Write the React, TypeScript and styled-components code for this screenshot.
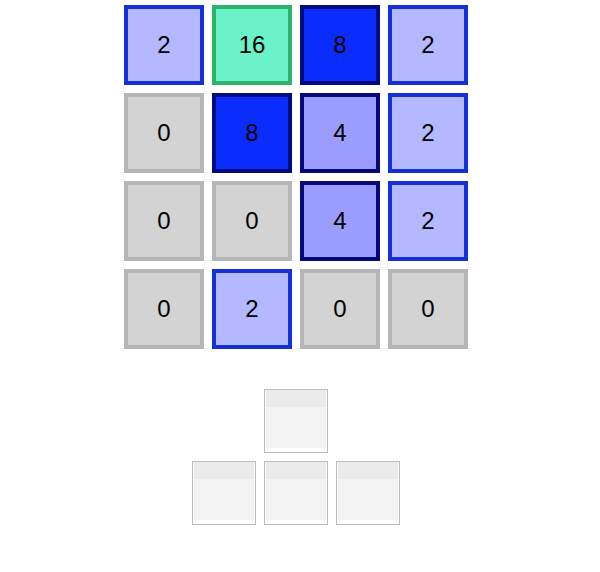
import React from "react";
import styled, { createGlobalStyle } from "styled-components";

const Global = createGlobalStyle`
  html, body { margin: 0; padding: 0; background: #ffffff; }
  body { font-family: "Liberation Sans", Arial, Helvetica, sans-serif; }
`;

type Palette = { bg: string; border: string };

const palette: Record<number, Palette> = {
  0: { bg: "#d3d3d3", border: "#b6b6b6" },
  2: { bg: "#b4b8fe", border: "#1530d6" },
  4: { bg: "#9a9dfd", border: "#05097a" },
  8: { bg: "#0a2dfd", border: "#000c7d" },
  16: { bg: "#6cf2c9", border: "#2db46c" },
};

const board: number[][] = [
  [2, 16, 8, 2],
  [0, 8, 4, 2],
  [0, 0, 4, 2],
  [0, 2, 0, 0],
];

const Page = styled.div`
  width: 592px;
  display: flex;
  flex-direction: column;
  align-items: center;
  padding-top: 5px;
`;

const Board = styled.div`
  display: grid;
  grid-template-columns: repeat(4, 80px);
  grid-auto-rows: 80px;
  gap: 8px;
`;

const Tile = styled.div<{ $bg: string; $border: string }>`
  box-sizing: border-box;
  width: 80px;
  height: 80px;
  border: 4px solid ${(p) => p.$border};
  background: ${(p) => p.$bg};
  display: flex;
  align-items: center;
  justify-content: center;
  font-size: 24px;
  line-height: 1;
  color: #000;
  padding-bottom: 1px;
`;

const Controls = styled.div`
  margin-top: 40px;
  display: grid;
  grid-template-columns: repeat(3, 64px);
  grid-auto-rows: 64px;
  gap: 8px;
`;

const Key = styled.button<{ $col: number; $row: number }>`
  grid-column: ${(p) => p.$col};
  grid-row: ${(p) => p.$row};
  box-sizing: border-box;
  width: 64px;
  height: 64px;
  padding: 0;
  border: 1px solid #bdbdbd;
  border-radius: 0;
  background: linear-gradient(
    to bottom,
    #ebebeb 0%,
    #ebebeb 28%,
    #f3f3f3 28%,
    #f3f3f3 94%,
    #ffffff 94%,
    #ffffff 100%
  );
  box-shadow: inset 1px 0 0 #fafafa, inset -1px 0 0 #fafafa;
`;

export default function App() {
  return (
    <>
      <Global />
      <Page>
        <Board>
          {board.flat().map((v, i) => (
            <Tile key={i} $bg={palette[v].bg} $border={palette[v].border}>
              {v}
            </Tile>
          ))}
        </Board>
        <Controls>
          <Key $col={2} $row={1} aria-label="up" />
          <Key $col={1} $row={2} aria-label="left" />
          <Key $col={2} $row={2} aria-label="down" />
          <Key $col={3} $row={2} aria-label="right" />
        </Controls>
      </Page>
    </>
  );
}
